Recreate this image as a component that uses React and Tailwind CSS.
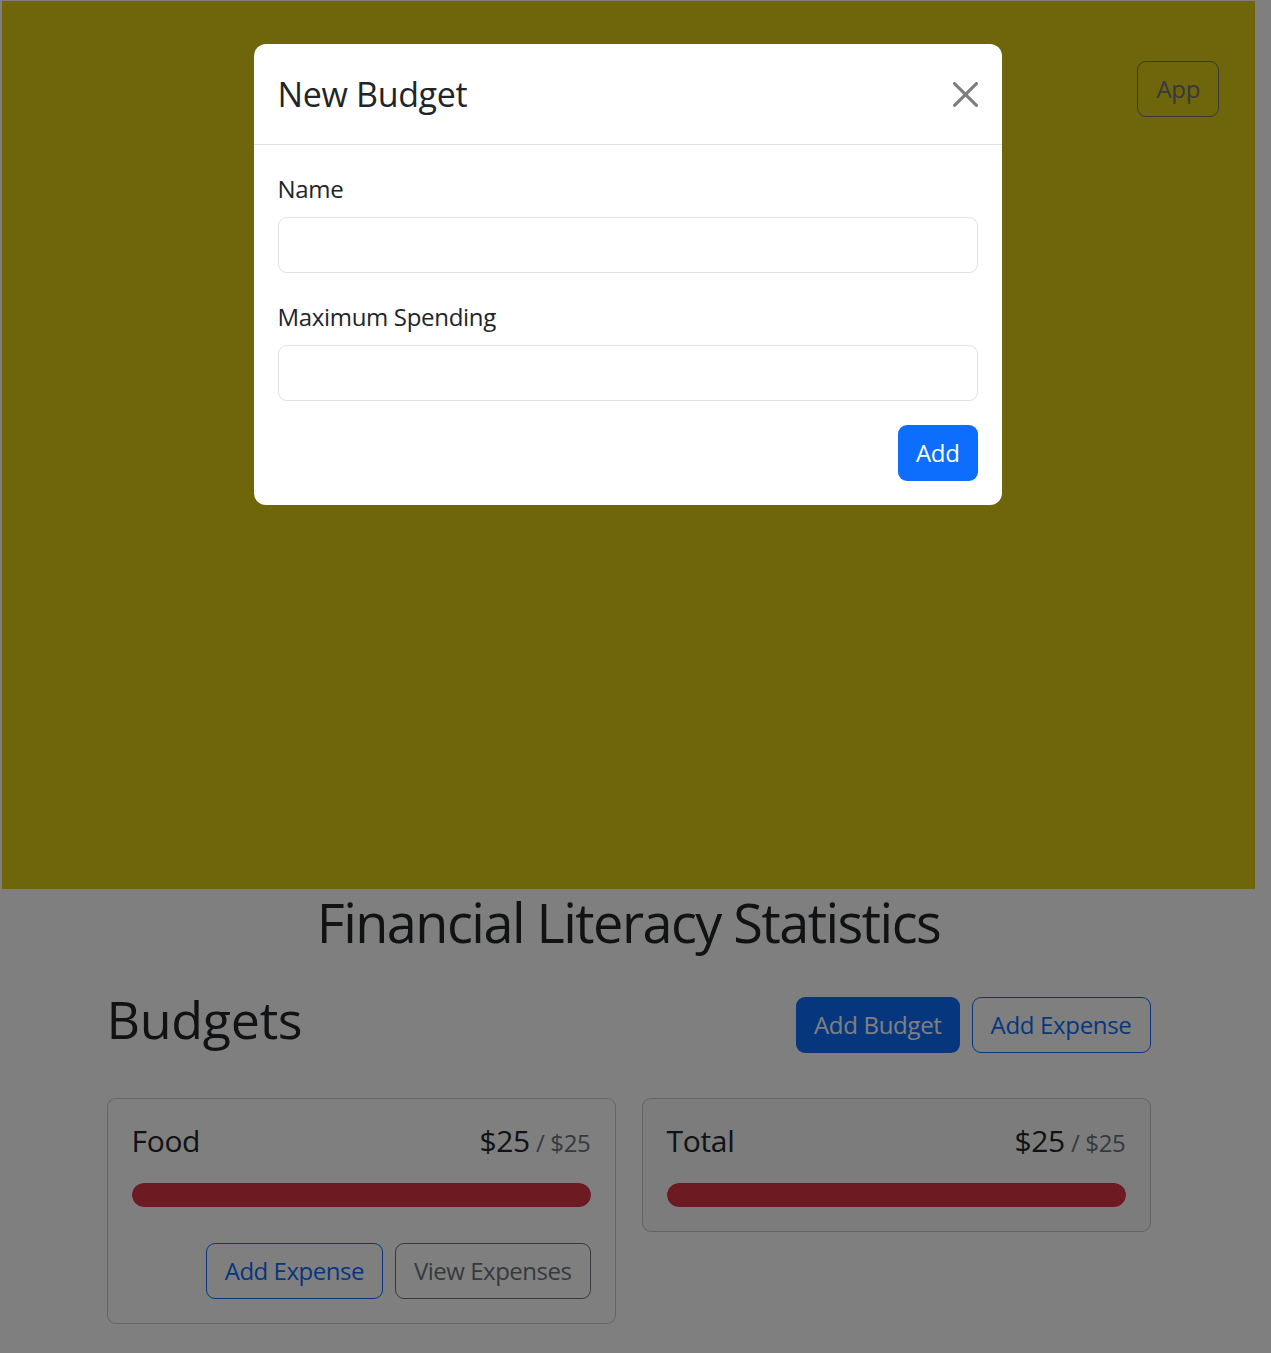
import React from 'react';

function BudgetCard({ name, amount, max, gray, hideButtons }) {
  return (
    <div
      className={`rounded-[9px] border border-black/20 ${gray ? 'bg-[#f8f9fa]' : 'bg-white'}`}
    >
      <div className="p-[24px]">
        <div className="mb-[24px] flex h-[36px] items-baseline justify-between text-[30px] leading-[36px] text-[#212529]">
          <div>{name}</div>
          <div className="flex items-baseline">
            {amount}
            <span className="ms-[6px] text-[24px] text-[#6c757d]">/ {max}</span>
          </div>
        </div>
        <div className="h-[24px] overflow-hidden rounded-full bg-[#e9ecef]">
          <div className="h-full w-full rounded-full bg-[#dc3545]" />
        </div>
        {!hideButtons && (
          <div className="mt-[36px] flex items-center justify-end gap-[12px] tracking-[-0.03em]">
            <button className="h-[56px] rounded-[9px] border border-[#0d6efd] px-[18px] text-[24px] text-[#0d6efd]">
              Add Expense
            </button>
            <button className="h-[56px] rounded-[9px] border border-[#6c757d] px-[18px] text-[24px] text-[#6c757d]">
              View Expenses
            </button>
          </div>
        )}
      </div>
    </div>
  );
}

function NewBudgetModal() {
  const classInput =
    'block h-[56px] w-full rounded-[9px] border border-[#dee2e6] bg-white px-[18px] text-[24px] outline-none';
  const classLabel = 'mb-[10px] block pt-[2px] text-[24px] leading-[36px] text-[#212529]';
  return (
    <div className="fixed inset-0 bg-black/50">
      <div className="flex justify-center pr-[16px] pt-[44px]">
        <div className="w-[748px] rounded-[12px] bg-white">
          <div className="flex h-[101px] items-center justify-between border-b border-[#dee2e6] px-[24px]">
            <h5 className="text-[34px] font-medium tracking-[-0.01em] text-[#212529]">New Budget</h5>
            <button className="flex h-[25px] w-[25px] items-center justify-center opacity-50">
              <svg viewBox="0 0 16 16" width="25" height="25" fill="#000">
                <path d="M.293.293a1 1 0 0 1 1.414 0L8 6.586 14.293.293a1 1 0 1 1 1.414 1.414L9.414 8l6.293 6.293a1 1 0 0 1-1.414 1.414L8 9.414l-6.293 6.293a1 1 0 0 1-1.414-1.414L6.586 8 .293 1.707a1 1 0 0 1 0-1.414z" />
              </svg>
            </button>
          </div>
          <form className="p-[24px]">
            <div className="mb-[24px]">
              <label className={classLabel}>Name</label>
              <input className={classInput} type="text" />
            </div>
            <div className="mb-[24px]">
              <label className={classLabel}>Maximum Spending</label>
              <input className={classInput} type="number" />
            </div>
            <div className="flex justify-end">
              <button
                type="button"
                className="h-[56px] rounded-[9px] bg-[#0d6efd] px-[18px] text-[24px] text-white"
              >
                Add
              </button>
            </div>
          </form>
        </div>
      </div>
    </div>
  );
}

export default function App() {
  return (
    <div className="min-h-screen bg-white pl-[2px] pr-[16px] pt-[1px] font-['Open_Sans',sans-serif] tracking-[-0.02em] text-[#212529]">
      <div className="flex h-[888px] justify-end bg-[#deca14] pr-[36px] pt-[60px]">
        <button className="h-[56px] rounded-[9px] border border-[#6c757d] px-[18px] text-[24px] text-[#6c757d]">
          App
        </button>
      </div>
      <h1 className="mb-[32px] text-center text-[54px] leading-[67px] tracking-[-0.028em]">
        Financial Literacy Statistics
      </h1>
      <div className="mx-auto w-[1044px]">
        <div className="mb-[36px] flex items-center gap-[12px]">
          <h1 className="mb-[12px] me-auto text-[52px] font-medium leading-[62px]">Budgets</h1>
          <button className="h-[56px] rounded-[9px] bg-[#0d6efd] px-[18px] text-[24px] text-white">
            Add Budget
          </button>
          <button className="h-[56px] rounded-[9px] border border-[#0d6efd] px-[18px] text-[24px] text-[#0d6efd]">
            Add Expense
          </button>
        </div>
        <div className="grid grid-cols-2 items-start gap-[26px] pb-[30px]">
          <BudgetCard name="Food" amount="$25" max="$25" />
          <BudgetCard name="Total" amount="$25" max="$25" gray hideButtons />
        </div>
      </div>
      <NewBudgetModal />
    </div>
  );
}
